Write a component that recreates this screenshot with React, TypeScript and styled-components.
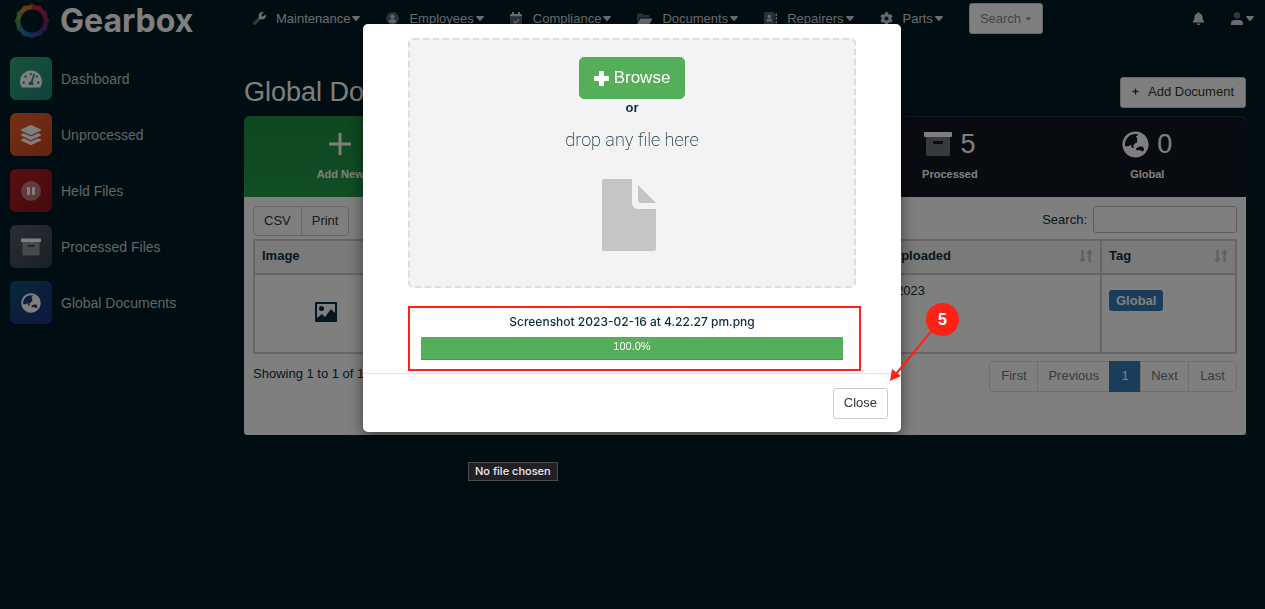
import React from "react";
import styled, { createGlobalStyle, css } from "styled-components";
import {
  FaBell,
  FaCaretDown,
  FaCog,
  FaGlobeAsia,
  FaLayerGroup,
  FaLongArrowAltDown,
  FaLongArrowAltUp,
  FaPlus,
  FaTachometerAlt,
} from "react-icons/fa";

const GlobalStyle = createGlobalStyle`
  * { box-sizing: border-box; }
  body {
    margin: 0;
    background: #001c26;
    color: #0b2e40;
    font-family: "Helvetica Neue", "Liberation Sans", Arial, sans-serif;
    font-size: 13px;
    line-height: 18px;
  }
  button, input { font: inherit; }
  a { color: inherit; text-decoration: none; }
`;

/* ---------- icons ---------- */

const WRENCH =
  "M507.73 109.1c-2.24-9.03-13.54-12.09-20.12-5.51l-74.36 74.36-67.88-11.31-11.31-67.88 74.36-74.36c6.62-6.62 3.43-17.9-5.66-20.16-47.38-11.74-99.55.91-136.58 37.93-39.64 39.64-50.55 97.1-34.05 147.2L18.74 402.76c-24.99 24.99-24.99 65.51 0 90.5 24.99 24.99 65.51 24.99 90.5 0l213.21-213.21c50.12 16.71 107.47 5.68 147.37-34.22 37.07-37.07 49.7-89.32 37.91-136.73z";

const WrenchIcon = () => (
  <svg width="13" height="13" viewBox="0 0 512 512" fill="currentColor" aria-hidden="true">
    <defs>
      <clipPath id="wrench-head">
        <path d="M150 0H512V340H330L190 200Z" />
      </clipPath>
    </defs>
    <path d={WRENCH} opacity=".45" />
    <path d={WRENCH} clipPath="url(#wrench-head)" />
  </svg>
);

const EmployeeIcon = () => (
  <svg width="13" height="13" viewBox="0 0 24 24" fill="currentColor" aria-hidden="true">
    <circle cx="12" cy="12" r="12" opacity=".4" />
    <circle cx="12" cy="8.500" r="4" />
    <path d="M5 18c0-3 2.500-4.500 5-4.500h4c2.500 0 5 1.500 5 4.500-2 2-4.500 3-7 3s-5-1-7-3z" />
  </svg>
);

const CalendarIcon = () => (
  <svg width="12" height="14" viewBox="0 0 24 28" fill="currentColor" aria-hidden="true">
    <path d="M0 10h24v15a3 3 0 0 1-3 3H3a3 3 0 0 1-3-3z" opacity=".4" />
    <path d="M0 9V6a2 2 0 0 1 2-2h2V0h4v4h8V0h4v4h2a2 2 0 0 1 2 2v3z" />
    <path d="M7 18l4 4 7-7" fill="none" stroke="currentColor" strokeWidth="2.500" />
  </svg>
);

const FolderIcon = () => (
  <svg width="15" height="12" viewBox="0 0 30 24" fill="currentColor" aria-hidden="true">
    <path d="M0 20V3a2 2 0 0 1 2-2h8l3 3h10a2 2 0 0 1 2 2v3H8a4 4 0 0 0-3 2z" opacity=".4" />
    <path d="M8 11h21a1 1 0 0 1 1 2l-5 9a3 3 0 0 1-3 1H2a1 1 0 0 1-1-2l5-9a2 2 0 0 1 2-1z" />
  </svg>
);

const AddressIcon = () => (
  <svg width="13" height="13" viewBox="0 0 26 26" fill="currentColor" aria-hidden="true">
    <rect width="21" height="26" rx="3" opacity=".4" />
    <circle cx="10.500" cy="9" r="3.500" />
    <path d="M4.500 19c0-4 2-5.500 4-5.500h4c2 0 4 1.500 4 5.500z" />
    <path d="M23 3h3v5h-3zM23 10.500h3v5h-3zM23 18h3v5h-3z" />
  </svg>
);

const UserIcon = () => (
  <svg width="12" height="13" viewBox="0 0 24 26" fill="currentColor" aria-hidden="true">
    <circle cx="12" cy="6.500" r="6.500" opacity=".45" />
    <path d="M0 25v-2c0-5 3-7 7-7h10c4 0 7 2 7 7v2a1 1 0 0 1-1 1H1a1 1 0 0 1-1-1z" />
  </svg>
);

const PauseIcon = () => (
  <svg width="20" height="20" viewBox="0 0 20 20" fill="currentColor" aria-hidden="true">
    <circle cx="10" cy="10" r="10" opacity=".4" />
    <rect x="6" y="6" width="3" height="8" rx="1" />
    <rect x="11" y="6" width="3" height="8" rx="1" />
  </svg>
);

const ArchiveIcon = ({ size }: { size: number }) => (
  <svg width={size} height={size} viewBox="0 0 28 28" fill="currentColor" aria-hidden="true">
    <path
      fillRule="evenodd"
      d="M2 7h24v17a2 2 0 0 1-2 2H4a2 2 0 0 1-2-2zM10 11a1 1 0 0 0-1 1v1a1 1 0 0 0 1 1h8a1 1 0 0 0 1-1v-1a1 1 0 0 0-1-1z"
      opacity=".4"
    />
    <rect y="2" width="28" height="5" rx="1" />
  </svg>
);

const ThinPlusIcon = () => (
  <svg width="22" height="22" viewBox="0 0 22 22" aria-hidden="true">
    <path d="M11 1v20M1 11h20" stroke="currentColor" strokeWidth="3" strokeLinecap="round" />
  </svg>
);

const BoldPlusIcon = () => (
  <svg width="15" height="15" viewBox="0 0 15 15" fill="currentColor" aria-hidden="true">
    <rect x="5" width="5" height="15" rx="1" />
    <rect y="5" width="15" height="5" rx="1" />
  </svg>
);

const PictureIcon = () => (
  <svg width="22" height="20" viewBox="0 0 22 20" fill="currentColor" aria-hidden="true">
    <path fillRule="evenodd" d="M1 0h20a1 1 0 0 1 1 1v18a1 1 0 0 1-1 1H1a1 1 0 0 1-1-1V1a1 1 0 0 1 1-1zM2 2v14l5-4 3 3 6-8 4 4V2z" />
    <circle cx="6.500" cy="6.500" r="2.500" />
  </svg>
);

const CaretIcon = () => (
  <svg width="8" height="5" viewBox="0 0 8 5" fill="currentColor" aria-hidden="true">
    <path d="M.6 0h6.800c.5 0 .8.600.4 1L4.600 4.700a.8.8 0 0 1-1.200 0L.2 1C-.2.600.1 0 .6 0z" />
  </svg>
);

const RING_COLORS = [
  "#e0342c", "#cf2440", "#b02055", "#8f2468", "#6a2a80", "#3d3f90",
  "#2a5aa5", "#1f78b5", "#2f8f8f", "#4aa050", "#8aa03a", "#d08a2c",
];

const LogoMark = () => (
  <svg width="36" height="36" viewBox="-18 -18 36 36" aria-hidden="true">
    {RING_COLORS.map((color, i) => (
      <path
        key={color}
        d="M0 -17.500L8 -13.500L6 -10.800L-6 -12L-7.500 -13.500Z"
        fill={color}
        opacity=".8"
        transform={`rotate(${30 * i})`}
      />
    ))}
  </svg>
);

/* ---------- top bar ---------- */

const TopBar = styled.header`
  display: flex;
  align-items: flex-start;
  height: 46px;
  padding: 3px 11px 0 14px;
  color: #fff;
`;

const Brand = styled.a`
  display: flex;
  align-items: center;
  gap: 10px;
  width: 239px;
  flex: none;
  font-family: Inter, "Liberation Sans", sans-serif;
  font-size: 32px;
  font-weight: 700;
  line-height: 36px;
`;

const Nav = styled.nav`
  display: flex;
  flex: 1;
  align-items: center;
  gap: 26px;
  height: 31px;
  color: #d4d8da;
`;

const NavLink = styled.a`
  display: flex;
  align-items: center;
  gap: 2px;
  white-space: nowrap;
`;

const NavIcon = styled.span`
  display: flex;
  min-width: 13px;
  margin-right: 8px;
  font-size: 13px;
`;

const baseButton = css`
  display: inline-flex;
  align-items: center;
  justify-content: center;
  height: 31px;
  padding: 0 10px;
  border: 1px solid #ccc;
  border-radius: 3px;
  background: #fff;
  color: #333;
  cursor: pointer;
`;

const SearchButton = styled.button`
  ${baseButton}
  gap: 4px;
  width: 74px;
  color: #888;
`;

const Account = styled.div`
  display: flex;
  align-items: center;
  gap: 26px;
  height: 31px;
`;

const IconButton = styled.button`
  display: flex;
  align-items: center;
  gap: 3px;
  padding: 0;
  border: 0;
  background: none;
  color: #d4d8da;
  font-size: 13px;
`;

/* ---------- side bar ---------- */

const Body = styled.div`
  display: flex;
`;

const SideBar = styled.nav`
  display: flex;
  flex: none;
  flex-direction: column;
  gap: 13px;
  width: 244px;
  padding: 11px 10px;
`;

const SideLink = styled.a`
  display: flex;
  align-items: center;
  gap: 9px;
  color: #c0c8cc;
  font-size: 14px;
`;

const Tile = styled.span<{ $from: string; $to: string }>`
  display: flex;
  align-items: center;
  justify-content: center;
  width: 42px;
  height: 43px;
  border-radius: 6px;
  background: linear-gradient(135deg, ${(p) => p.$from}, ${(p) => p.$to});
  color: #fff;
  font-size: 22px;
`;

/* ---------- page ---------- */

const Main = styled.main`
  flex: 1;
  min-width: 0;
  padding: 31px 19px 0 0;
`;

const TitleRow = styled.div`
  display: flex;
  align-items: center;
  justify-content: space-between;
  height: 31px;
  margin-bottom: 8px;
  color: #fff;
`;

const Title = styled.h1`
  margin: 0;
  padding-bottom: 2px;
  font-size: 27px;
  font-weight: 500;
  line-height: 30px;
`;

const AddButton = styled.button`
  ${baseButton}
  gap: 9px;
  padding: 0 11px 2px;
`;

const Panel = styled.section`
  overflow: hidden;
  border-radius: 6px 6px 3px 3px;
  background: #fff;
`;

const Stats = styled.div`
  display: grid;
  grid-template-columns: 192fr 414fr 197fr 197fr;
  background: #11161f;
  box-shadow: inset 0 1px 0 #262b33;
  color: #fff;
`;

const Stat = styled.a<{ $green?: boolean }>`
  display: flex;
  flex-direction: column;
  align-items: center;
  gap: 5px;
  height: 81px;
  padding-top: 12px;
  background: ${(p) => (p.$green ? "linear-gradient(#1e8f42, #229a4a)" : "none")};
  font-size: 11px;
  font-weight: 700;
`;

const StatValue = styled.span`
  display: flex;
  align-items: center;
  gap: 8px;
  height: 32px;
  font-size: 27px;
  font-weight: 400;
`;

const PanelBody = styled.div`
  padding: 9px 9px 43px;
`;

const ToolRow = styled.div`
  display: flex;
  align-items: flex-start;
  justify-content: space-between;
  height: 33px;
`;

const Group = styled.div`
  display: flex;
`;

const GroupButton = styled.button`
  ${baseButton}
  height: 30px;
  border-radius: 0;
  & + & { margin-left: -1px; }
  &:first-child { border-radius: 4px 0 0 4px; }
  &:last-child { border-radius: 0 4px 4px 0; }
`;

const PageButton = styled(GroupButton)<{ $active?: boolean }>`
  height: 31px;
  min-width: ${(p) => (p.$active ? 32 : 49)}px;
  padding: 0 10px 2px;
  border-color: ${(p) => (p.$active ? "#337ab7" : "#ddd")};
  background: ${(p) => (p.$active ? "#337ab7" : "#fff")};
  color: ${(p) => (p.$active ? "#fff" : "#777")};
`;

const Filter = styled.label`
  display: flex;
  align-items: center;
  gap: 6px;
`;

const FilterInput = styled.input`
  width: 144px;
  height: 27px;
  border: 1px solid #bbb;
  border-radius: 3px;
  background: #fff;
`;

const DataTable = styled.table`
  width: 100%;
  border-collapse: collapse;
  table-layout: fixed;
  th, td {
    border: 2px solid #ccc;
    text-align: left;
    vertical-align: top;
  }
  th {
    height: 34px;
    padding: 6px 7px;
    background: #f4f4f4;
  }
  td {
    height: 79px;
    padding: 7px;
  }
`;

const ImageCol = styled.col`
  width: 144px;
`;

const DateCol = styled.col`
  width: 249px;
`;

const TagCol = styled.col`
  width: 135px;
`;

const Heading = styled.div`
  display: flex;
  align-items: center;
  justify-content: space-between;
`;

const Sort = styled.span`
  display: flex;
  color: #bcc0c4;
  font-size: 14px;
  svg { width: 7px; }
`;

const Thumb = styled.div`
  display: flex;
  align-items: center;
  justify-content: center;
  height: 60px;
`;

const Tag = styled.span`
  display: inline-block;
  margin-top: 8px;
  padding: 0 7px;
  border-radius: 3px;
  background: #337ab7;
  color: #fff;
  font-weight: 700;
  line-height: 21px;
`;

const FootRow = styled.div`
  display: flex;
  justify-content: space-between;
  padding-top: 7px;
`;

const Showing = styled.span`
  padding-top: 4px;
`;

/* ---------- dialog ---------- */

const Backdrop = styled.div`
  position: fixed;
  inset: 0;
  display: flex;
  align-items: flex-start;
  justify-content: center;
  padding: 24px 1px 0 0;
  background: rgba(0, 0, 0, 0.5);
`;

const Dialog = styled.div`
  position: relative;
  width: 538px;
  border-radius: 5px;
  background: #fff;
  box-shadow: 0 5px 15px rgba(0, 0, 0, 0.5);
`;

const DialogBody = styled.div`
  padding: 14px 40px 2px 45px;
`;

const DropZone = styled.div`
  display: flex;
  flex-direction: column;
  align-items: center;
  height: 250px;
  margin-right: 5px;
  padding-top: 17px;
  border: 2px dashed #ddd;
  border-radius: 5px;
  background: #f3f3f3;
`;

const BrowseButton = styled.button`
  display: flex;
  align-items: center;
  gap: 5px;
  height: 42px;
  padding: 0 14px;
  border: 1px solid #4cae4c;
  border-radius: 5px;
  background: #55ae59;
  color: #fff;
  font-size: 17px;
`;

const DropHint = styled.p`
  margin: 12px 0 28px;
  font-family: Roboto, "Liberation Sans", sans-serif;
  font-size: 18px;
  font-weight: 200;
  line-height: 22px;
`;

const FileGlyph = styled.svg`
  width: 54px;
  height: 72px;
  margin-right: 6px;
  fill: #c5c5c5;
`;

const Upload = styled.div`
  margin-top: 18px;
  padding: 5px 16px 9px 11px;
  border: 2px solid #ff2017;
  text-align: center;
`;

const FileName = styled.div`
  margin-bottom: 6px;
  font-family: Inter, "Liberation Sans", sans-serif;
  font-size: 12px;
  font-weight: 500;
`;

const Progress = styled.div`
  height: 23px;
  background: #55ae59;
  box-shadow: inset 0 -1px 0 #4a964d;
  color: #fff;
  font-size: 11px;
`;

const DialogFooter = styled.div`
  display: flex;
  justify-content: flex-end;
  padding: 14px 13px 13px;
  border-top: 1px solid #e2e2e2;
`;

const CloseButton = styled.button`
  ${baseButton}
  padding: 0 10px 2px;
`;

const Callout = styled.div`
  position: absolute;
  top: 279px;
  left: 526px;
  width: 72px;
  height: 82px;
`;

const CalloutArrow = styled.svg`
  display: block;
`;

const CalloutBadge = styled.span`
  position: absolute;
  top: 0;
  right: 2px;
  width: 33px;
  border-radius: 50%;
  background: #ff2017;
  color: #fff;
  font-size: 16px;
  font-weight: 700;
  line-height: 33px;
  text-align: center;
`;

const Tooltip = styled.div`
  position: absolute;
  top: 438px;
  left: 105px;
  padding: 0 6px;
  border: 1px solid #4c4b50;
  background: #221f26;
  color: #eee;
  font-family: Inter, "Liberation Sans", sans-serif;
  font-size: 11px;
  font-weight: 500;
  line-height: 17px;
  white-space: nowrap;
`;

const NAV = [
  { label: "Maintenance", icon: <WrenchIcon /> },
  { label: "Employees", icon: <EmployeeIcon /> },
  { label: "Compliance", icon: <CalendarIcon /> },
  { label: "Documents", icon: <FolderIcon /> },
  { label: "Repairers", icon: <AddressIcon /> },
  { label: "Parts", icon: <FaCog /> },
];

const SIDE = [
  { label: "Dashboard", from: "#33a873", to: "#1c8580", icon: <FaTachometerAlt /> },
  { label: "Unprocessed", from: "#e8622a", to: "#c9471c", icon: <FaLayerGroup size={20} /> },
  { label: "Held Files", from: "#b81c22", to: "#85161a", icon: <PauseIcon /> },
  { label: "Processed Files", from: "#555b68", to: "#373d4a", icon: <ArchiveIcon size={20} /> },
  { label: "Global Documents", from: "#10506e", to: "#1b2f86", icon: <FaGlobeAsia size={20} /> },
];

const SortMark = () => (
  <Sort>
    <FaLongArrowAltDown />
    <FaLongArrowAltUp />
  </Sort>
);

export default function App() {
  return (
    <>
      <GlobalStyle />
      <TopBar>
        <Brand href="#">
          <LogoMark />
          Gearbox
        </Brand>
        <Nav>
          {NAV.map((n) => (
            <NavLink href="#" key={n.label}>
              <NavIcon>{n.icon}</NavIcon>
              {n.label}
              <CaretIcon />
            </NavLink>
          ))}
          <SearchButton>
            Search
            <FaCaretDown size={9} />
          </SearchButton>
        </Nav>
        <Account>
          <IconButton aria-label="Notifications">
            <FaBell />
          </IconButton>
          <IconButton aria-label="Account">
            <UserIcon />
            <CaretIcon />
          </IconButton>
        </Account>
      </TopBar>
      <Body>
        <SideBar>
          {SIDE.map((s) => (
            <SideLink href="#" key={s.label}>
              <Tile $from={s.from} $to={s.to}>
                {s.icon}
              </Tile>
              {s.label}
            </SideLink>
          ))}
        </SideBar>
        <Main>
          <TitleRow>
            <Title>Global Documents</Title>
            <AddButton>
              <FaPlus size={7} />
              Add Document
            </AddButton>
          </TitleRow>
          <Panel>
            <Stats>
              <Stat href="#" $green>
                <StatValue>
                  <ThinPlusIcon />
                </StatValue>
                Add New
              </Stat>
              <span />
              <Stat href="#">
                <StatValue>
                  <ArchiveIcon size={28} />5
                </StatValue>
                Processed
              </Stat>
              <Stat href="#">
                <StatValue>
                  <FaGlobeAsia />0
                </StatValue>
                Global
              </Stat>
            </Stats>
            <PanelBody>
              <ToolRow>
                <Group>
                  <GroupButton>CSV</GroupButton>
                  <GroupButton>Print</GroupButton>
                </Group>
                <Filter>
                  Search:
                  <FilterInput type="search" />
                </Filter>
              </ToolRow>
              <DataTable>
                <colgroup>
                  <ImageCol />
                  <col />
                  <DateCol />
                  <TagCol />
                </colgroup>
                <thead>
                  <tr>
                    <th>Image</th>
                    <th />
                    <th>
                      <Heading>
                        Date Uploaded
                        <SortMark />
                      </Heading>
                    </th>
                    <th>
                      <Heading>
                        Tag
                        <SortMark />
                      </Heading>
                    </th>
                  </tr>
                </thead>
                <tbody>
                  <tr>
                    <td>
                      <Thumb>
                        <PictureIcon />
                      </Thumb>
                    </td>
                    <td />
                    <td>16/02/2023</td>
                    <td>
                      <Tag>Global</Tag>
                    </td>
                  </tr>
                </tbody>
              </DataTable>
              <FootRow>
                <Showing>Showing 1 to 1 of 1 entries</Showing>
                <Group>
                  <PageButton>First</PageButton>
                  <PageButton>Previous</PageButton>
                  <PageButton $active>1</PageButton>
                  <PageButton>Next</PageButton>
                  <PageButton>Last</PageButton>
                </Group>
              </FootRow>
            </PanelBody>
          </Panel>
        </Main>
      </Body>
      <Backdrop>
        <Dialog role="dialog" aria-label="Upload document">
          <DialogBody>
            <DropZone>
              <BrowseButton>
                <BoldPlusIcon />
                Browse
              </BrowseButton>
              <strong>or</strong>
              <DropHint>drop any file here</DropHint>
              <FileGlyph viewBox="0 0 54 72" aria-hidden="true">
                <path d="M2 0H30V24a6 6 0 0 0 6 6H54V70a2 2 0 0 1-2 2H2a2 2 0 0 1-2-2V2a2 2 0 0 1 2-2z" />
                <path d="M36 6L54 24H39a3 3 0 0 1-3-3z" />
              </FileGlyph>
            </DropZone>
            <Upload>
              <FileName>Screenshot 2023-02-16 at 4.22.27 pm.png</FileName>
              <Progress>100.0%</Progress>
            </Upload>
          </DialogBody>
          <DialogFooter>
            <CloseButton>Close</CloseButton>
          </DialogFooter>
          <Callout>
            <CalloutArrow width="72" height="82" viewBox="0 0 72 82" aria-hidden="true">
              <path d="M44 26L7 71" stroke="#ff2017" strokeWidth="2" />
              <path d="M1 78L3 66L12 73Z" fill="#ff2017" />
            </CalloutArrow>
            <CalloutBadge>5</CalloutBadge>
          </Callout>
          <Tooltip role="tooltip">No file chosen</Tooltip>
        </Dialog>
      </Backdrop>
    </>
  );
}
